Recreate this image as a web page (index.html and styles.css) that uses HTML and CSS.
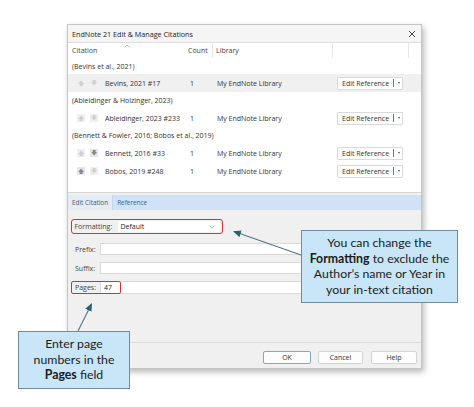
FILE: index.html
```html
<!DOCTYPE html>
<html>
<head>
<meta charset="utf-8">
<link rel="stylesheet" href="styles.css">
</head>
<body>
<div class="stage">
  <div class="dialog">
    <div class="titlebar">
      <span class="title">EndNote 21 Edit &amp; Manage Citations</span>
      <svg class="close" width="8" height="8" viewBox="0 0 8 8"><path d="M1 1L7 7M7 1L1 7" stroke="#444" stroke-width="1"/></svg>
    </div>
    <div class="list">
      <div class="head">
        <span class="h-cit">Citation<svg class="caret" width="6" height="4" viewBox="0 0 6 4"><path d="M0.5 3.5L3 1L5.5 3.5" fill="none" stroke="#aaa" stroke-width="0.8"/></svg></span>
        <span class="h-cnt">Count</span>
        <span class="h-lib">Library</span>
        <span class="h-btn"></span>
        <span class="h-end"></span>
      </div>
      <div class="group first">(Bevins et al., 2021)</div>
      <div class="row sel">
        <span class="cit"><i class="mv off">&#129093;</i><i class="mv off">&#129095;</i><span class="ctext">Bevins, 2021 #17</span></span>
        <span class="cnt">1</span>
        <span class="lib">My EndNote Library</span>
        <span class="bc"><span class="eref">Edit Reference<span class="sep"></span><span class="tri"></span></span></span>
      </div>
      <div class="group">(Ableidinger &amp; Holzinger, 2023)</div>
      <div class="row">
        <span class="cit"><i class="mv off">&#129093;</i><i class="mv off">&#129095;</i><span class="ctext">Ableidinger, 2023 #233</span></span>
        <span class="cnt">1</span>
        <span class="lib">My EndNote Library</span>
        <span class="bc"><span class="eref">Edit Reference<span class="sep"></span><span class="tri"></span></span></span>
      </div>
      <div class="group">(Bennett &amp; Fowler, 2016; Bobos et al., 2019)</div>
      <div class="row">
        <span class="cit"><i class="mv off">&#129093;</i><i class="mv">&#129095;</i><span class="ctext">Bennett, 2016 #33</span></span>
        <span class="cnt">1</span>
        <span class="lib">My EndNote Library</span>
        <span class="bc"><span class="eref">Edit Reference<span class="sep"></span><span class="tri"></span></span></span>
      </div>
      <div class="row">
        <span class="cit"><i class="mv">&#129093;</i><i class="mv off">&#129095;</i><span class="ctext">Bobos, 2019 #248</span></span>
        <span class="cnt">1</span>
        <span class="lib">My EndNote Library</span>
        <span class="bc"><span class="eref">Edit Reference<span class="sep"></span><span class="tri"></span></span></span>
      </div>
    </div>
    <div class="lower">
      <div class="tabs">
        <span class="tab active">Edit Citation</span>
        <span class="tab">Reference</span>
      </div>
      <div class="form">
        <div class="fmt-box">
          <span class="lbl">Formatting:</span>
          <span class="select">Default<svg class="chev" width="6" height="4" viewBox="0 0 6 4"><path d="M0.5 0.8L3 3.2L5.5 0.8" fill="none" stroke="#999" stroke-width="0.8"/></svg></span>
        </div>
        <div class="frow prefix">
          <span class="lbl">Prefix:</span>
          <span class="input"></span>
        </div>
        <div class="frow suffix">
          <span class="lbl">Suffix:</span>
          <span class="input"></span>
        </div>
        <div class="frow pages">
          <span class="lbl">Pages:</span>
          <span class="input">47</span>
          <span class="hl"></span>
        </div>
      </div>
      <div class="footer">
        <span class="btn ok">OK</span>
        <span class="btn cancel">Cancel</span>
        <span class="btn help">Help</span>
      </div>
    </div>
  </div>

  <svg class="arrows" width="474" height="407" viewBox="0 0 474 407">
    <defs>
      <marker id="ah" markerWidth="8" markerHeight="8" refX="7" refY="4" orient="auto" markerUnits="userSpaceOnUse">
        <path d="M0 0.5L8 4L0 7.5Z" fill="#2f6070"/>
      </marker>
    </defs>
    <line x1="301" y1="255" x2="234" y2="231.5" stroke="#4f7888" stroke-width="1.1" marker-end="url(#ah)"/>
    <line x1="78" y1="331" x2="91.5" y2="304" stroke="#4f7888" stroke-width="1.1" marker-end="url(#ah)"/>
  </svg>

  <div class="callout c1">You can change the<br><b>Formatting</b> to exclude the<br>Author’s name or Year in<br>your in-text citation</div>
  <div class="callout c2">Enter page<br>numbers in the<br><b>Pages</b> field</div>
</div>
</body>
</html>
```

FILE: styles.css
```css
html, body {
  margin: 0;
  padding: 0;
  background: #ffffff;
}
.stage {
  position: relative;
  width: 474px;
  height: 407px;
  overflow: hidden;
  font-family: "Open Sans", "Noto Sans", sans-serif;
  color: #333;
}
.dialog {
  position: relative;
  margin-left: 67px;
  top: 24px;
  width: 355px;
  height: 345px;
  box-sizing: border-box;
  border: 1px solid #c4c4c4;
  background: #f0f0f0;
  box-shadow: 2px 3px 6px rgba(0,0,0,0.28);
  display: flex;
  flex-direction: column;
  font-size: 7px;
}
.titlebar {
  height: 17px;
  flex: none;
  background: #f5f5f5;
  border-bottom: 1px solid #dedede;
  display: flex;
  align-items: center;
  padding-left: 4px;
  padding-right: 5px;
  font-size: 7.2px;
  color: #222;
}
.title { flex: 1; }
.close { display: block; }

.list {
  height: 149px;
  flex: none;
  background: #fff;
  border-bottom: 1px solid #d6d6d6;
}
.head, .row {
  display: grid;
  grid-template-columns: 118px 26px 120px 76px 1fr;
  align-items: center;
}
.head {
  height: 15px;
  color: #444;
}
.head > span {
  height: 15px;
  display: flex;
  align-items: center;
  box-sizing: border-box;
}
.h-cit { padding-left: 4px; position: relative; }
.caret { position: absolute; left: 56px; top: 1px; }
.h-cnt { padding-left: 2px; }
.h-lib { padding-left: 3px; border-left: 1px solid #e8e8e8; }
.h-btn { border-left: 1px solid #e8e8e8; }
.h-end { border-left: 1px solid #e8e8e8; }

.group {
  height: 17px;
  display: flex;
  align-items: center;
  padding-left: 4px;
  color: #333;
}
.group.first { height: 16px; }
.row {
  height: 18px;
  color: #333;
}
.row.sel { background: #f0f0f0; }
.cit {
  display: flex;
  align-items: center;
  padding-left: 9px;
}
.mv {
  font-style: normal;
  width: 8px;
  height: 8px;
  background: #e6e6e6;
  color: #888;
  font-size: 6px;
  line-height: 8px;
  text-align: center;
  margin-right: 5px;
  font-family: "DejaVu Sans", sans-serif;
}
.mv.off { color: #d0d0d0; background: #efefef; }
.ctext { margin-left: 2px; }
.cnt { padding-left: 4px; }
.lib { padding-left: 5px; }
.bc { padding-left: 5px; display: flex; }
.eref {
  width: 66px;
  height: 13px;
  box-sizing: border-box;
  background: #fff;
  border: 1px solid #dadada;
  border-radius: 1px;
  display: flex;
  align-items: center;
  padding-left: 4px;
  color: #333;
}
.sep {
  width: 1px;
  height: 8px;
  background: #777;
  margin-left: 4px;
}
.tri {
  width: 0;
  height: 0;
  border-left: 1.6px solid transparent;
  border-right: 1.6px solid transparent;
  border-top: 2px solid #555;
  margin-left: 4px;
}

.lower {
  flex: 1;
  display: flex;
  flex-direction: column;
  padding-top: 2px;
  background: #f0f0f0;
}
.tabs {
  height: 15px;
  background: #cfe2f7;
  display: flex;
  align-items: stretch;
  font-size: 6.4px;
}
.tab {
  display: flex;
  align-items: center;
  padding: 0 4px;
  color: #3b5f8f;
  white-space: nowrap;
}
.tab.active {
  background: #e3ecf7;
  color: #555;
  box-sizing: border-box;
  border-right: 1px solid #c4d6ea;
}
.form {
  flex: 1;
  padding: 9px 0 0 3px;
}
.fmt-box {
  width: 152px;
  height: 15px;
  box-sizing: border-box;
  border: 1.5px solid #d8302e;
  border-radius: 3px;
  display: flex;
  align-items: center;
  padding-left: 2.5px;
}
.lbl { color: #444; }
.fmt-box .lbl { width: 43px; }
.select {
  width: 102px;
  height: 11px;
  box-sizing: border-box;
  background: #fff;
  display: flex;
  align-items: center;
  padding-left: 3px;
  color: #222;
  position: relative;
}
.chev { position: absolute; right: 5px; top: 4px; }
.frow {
  display: flex;
  align-items: center;
  padding-left: 4px;
  position: relative;
}
.frow .lbl { width: 25px; }
.input {
  width: 318px;
  box-sizing: border-box;
  background: #fff;
  border: 1px solid #d9d9d9;
  height: 12px;
  display: flex;
  align-items: center;
  padding-left: 3px;
  color: #222;
}
.prefix { margin-top: 9px; height: 12px; }
.suffix { margin-top: 7px; height: 12px; }
.pages { margin-top: 7px; height: 13px; }
.pages .input { height: 13px; }
.hl {
  position: absolute;
  left: 0;
  top: 0;
  width: 50px;
  height: 13px;
  box-sizing: border-box;
  border: 1.5px solid #d8302e;
  border-radius: 2px;
}
.footer {
  height: 26px;
  box-sizing: border-box;
  border-top: 1px solid #dcdcdc;
  display: flex;
  justify-content: flex-end;
  align-items: flex-start;
  padding: 8px 4px 0 0;
  gap: 7px;
}
.btn {
  height: 13px;
  box-sizing: border-box;
  background: #fdfdfd;
  border: 1px solid #d4d4d4;
  border-radius: 2px;
  display: flex;
  align-items: center;
  justify-content: center;
  color: #333;
  font-size: 7px;
}
.ok { width: 48px; border-color: #7fa6d6; }
.cancel { width: 45px; }
.help { width: 46px; margin-left: 1px; }

.arrows {
  position: absolute;
  left: 0;
  top: 0;
  pointer-events: none;
}
.callout {
  position: absolute;
  box-sizing: border-box;
  background: #c8e6f7;
  border: 1.5px solid #6f8c9b;
  text-align: center;
  font-family: Lato, "Open Sans", sans-serif;
  color: #1c1c1c;
  font-size: 12.3px;
  line-height: 15.7px;
}
.callout b { font-weight: 700; }
.c1 {
  left: 301px;
  top: 230px;
  width: 157px;
  height: 73px;
  padding-top: 4px;
}
.c2 {
  left: 18px;
  top: 331px;
  width: 112px;
  height: 58px;
  padding-top: 4px;
}
```
